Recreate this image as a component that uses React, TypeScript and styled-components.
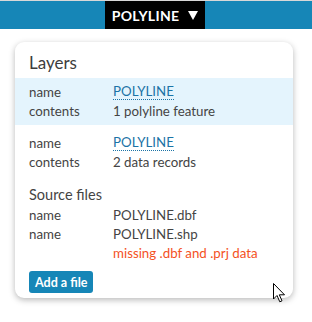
import styled, { createGlobalStyle } from 'styled-components';

const GlobalStyle = createGlobalStyle`
  html, body {
    margin: 0;
    padding: 0;
    background: #ffffff;
    font-family: Lato, "Open Sans", sans-serif;
  }
`;

const Page = styled.div`
  position: relative;
  width: 312px;
  height: 322px;
  overflow: hidden;
`;

const TopBar = styled.div`
  height: 28px;
  border-top: 1px solid #d8d8d8;
  background: #1686b7;
  display: flex;
  justify-content: center;
`;

const Tab = styled.div`
  width: 100px;
  margin-left: -2px;
  background: #000;
  color: #fff;
  font-weight: 700;
  font-size: 14px;
  display: flex;
  align-items: center;
  justify-content: center;
  gap: 9px;
  letter-spacing: 0.3px;
`;

const Card = styled.div`
  margin: 13px 0 0 15px;
  width: 278px;
  background: #fff;
  border-radius: 9px;
  box-shadow: 0 2px 6px rgba(0, 0, 0, 0.28);
  padding: 7px 0 5px;
  color: #444;
  font-size: 13.3px;
`;

const Title = styled.div`
  font-size: 17px;
  padding: 0 14px 2px;
  height: 27px;
  line-height: 27px;
  color: #3d3d3d;
`;

const Group = styled.div<{ $active?: boolean }>`
  background: ${(p) => (p.$active ? '#e4f4fd' : 'transparent')};
  padding: 5px 14px 4px;
  margin-bottom: ${(p) => (p.$active ? '4px' : '0')};
`;

const Row = styled.div`
  display: grid;
  grid-template-columns: 84px 1fr;
  line-height: 19px;
`;

const Key = styled.span`
  color: #444;
`;

const LinkValue = styled.span`
  color: #1b73a6;
  justify-self: start;
  border-bottom: 1px dotted #1b73a6;
  line-height: 16px;
  margin-bottom: 2px;
`;

const Warn = styled.span`
  color: #f4511e;
`;

const Subhead = styled.div`
  font-size: 14.5px;
  padding: 9px 14px 1px;
  line-height: 20px;
`;

const Files = styled.div`
  padding: 0 14px;
`;

const AddButton = styled.button`
  margin: 8px 0 0 14px;
  background: #1686b7;
  color: #fff;
  border: none;
  border-radius: 3px;
  font-family: inherit;
  font-size: 12.5px;
  font-weight: 700;
  height: 22px;
  padding: 0 6px;
`;

const Cursor = styled.svg`
  position: absolute;
  left: 273px;
  top: 283px;
`;

export default function App() {
  return (
    <Page>
      <GlobalStyle />
      <TopBar>
        <Tab>
          POLYLINE
          <svg width="10" height="9" viewBox="0 0 10 9">
            <path d="M0 0 H10 L5 9 Z" fill="#fff" />
          </svg>
        </Tab>
      </TopBar>
      <Card>
        <Title>Layers</Title>
        <Group $active>
          <Row>
            <Key>name</Key>
            <LinkValue>POLYLINE</LinkValue>
          </Row>
          <Row>
            <Key>contents</Key>
            <span>1 polyline feature</span>
          </Row>
        </Group>
        <Group>
          <Row>
            <Key>name</Key>
            <LinkValue>POLYLINE</LinkValue>
          </Row>
          <Row>
            <Key>contents</Key>
            <span>2 data records</span>
          </Row>
        </Group>
        <Subhead>Source files</Subhead>
        <Files>
          <Row>
            <Key>name</Key>
            <span>POLYLINE.dbf</span>
          </Row>
          <Row>
            <Key>name</Key>
            <span>POLYLINE.shp</span>
          </Row>
          <Row>
            <span />
            <Warn>missing .dbf and .prj data</Warn>
          </Row>
        </Files>
        <AddButton>Add a file</AddButton>
      </Card>
      <Cursor width="13" height="20" viewBox="0 0 13 20">
        <path d="M0.5 0.5 V16 L4 12.5 L6.8 18.8 L9 17.8 L6.3 11.8 H11.5 Z" fill="#fff" stroke="#000" strokeWidth="1" strokeLinejoin="miter" />
      </Cursor>
    </Page>
  );
}
